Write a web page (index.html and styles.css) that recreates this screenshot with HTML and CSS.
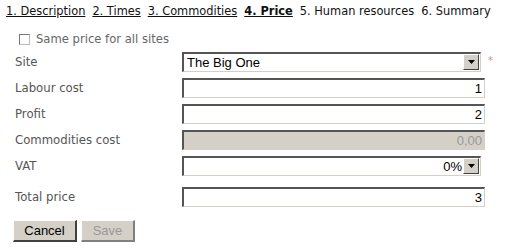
FILE: index.html
```html
<!DOCTYPE html>
<html>
<head>
<meta charset="utf-8">
<link rel="stylesheet" href="styles.css">
</head>
<body>
<nav class="steps">
  <a class="step link" href="#">1. Description</a>
  <a class="step link" href="#">2. Times</a>
  <a class="step link" href="#">3. Commodities</a>
  <a class="step link current" href="#">4. Price</a>
  <span class="step">5. Human resources</span>
  <span class="step">6. Summary</span>
</nav>
<form class="form">
  <label class="same"><span class="checkbox"></span>Same price for all sites</label>
  <div class="row">
    <span class="label">Site</span>
    <div class="select wide"><span class="value">The Big One</span><span class="arrow"><svg width="7" height="4" viewBox="0 0 7 4"><path d="M0 0h7L3.5 4z" fill="#000"/></svg></span></div>
    <span class="req">*</span>
  </div>
  <div class="row">
    <span class="label">Labour cost</span>
    <div class="input">1</div>
  </div>
  <div class="row">
    <span class="label">Profit</span>
    <div class="input">2</div>
  </div>
  <div class="row">
    <span class="label">Commodities cost</span>
    <div class="input disabled">0,00</div>
  </div>
  <div class="row">
    <span class="label">VAT</span>
    <div class="select wide right"><span class="value">0%</span><span class="arrow"><svg width="7" height="4" viewBox="0 0 7 4"><path d="M0 0h7L3.5 4z" fill="#000"/></svg></span></div>
  </div>
  <div class="row total">
    <span class="label">Total price</span>
    <div class="input">3</div>
  </div>
  <div class="buttons">
    <button type="button" class="btn">Cancel</button>
    <button type="button" class="btn disabled">Save</button>
  </div>
</form>
</body>
</html>
```

FILE: styles.css
```css
html, body {
  margin: 0;
  padding: 0;
  background: #fff;
}
body {
  width: 508px;
  height: 248px;
  overflow: hidden;
  font-family: "DejaVu Sans", Verdana, sans-serif;
  font-size: 11.7px;
  color: #555;
}
.steps {
  display: flex;
  gap: 7px;
  padding: 3px 0 0 6px;
  height: 18px;
  line-height: 16px;
  font-size: 11.4px;
  color: #111;
}
.step {
  color: #111;
  text-decoration: none;
  white-space: nowrap;
}
.step.link {
  text-decoration: underline;
}
.step.current {
  font-weight: bold;
}
.form {
  display: flex;
  flex-direction: column;
}
.same {
  display: flex;
  align-items: center;
  height: 16px;
  margin: 10px 0 0 19px;
  color: #666;
  font-size: 11.6px;
}
.checkbox {
  width: 9px;
  height: 9px;
  border: 1px solid #777;
  border-right-color: #bbb;
  border-bottom-color: #bbb;
  margin-right: 6px;
  background: #fff;
}
.row {
  display: grid;
  grid-template-columns: 167px 303px auto;
  align-items: center;
  height: 20px;
  margin-top: 6px;
  padding-left: 15px;
}
.same + .row {
  margin-top: 5px;
}
.row.total {
  margin-top: 11px;
}
.label {
  color: #555;
}
.input, .select {
  box-sizing: border-box;
  height: 20px;
  background: #fff;
  border-top: 2px solid #555;
  border-left: 2px solid #555;
  border-right: 1px solid #d4d0c8;
  border-bottom: 1px solid #d4d0c8;
  font-family: "Liberation Sans", Arial, sans-serif;
  font-size: 13px;
  color: #000;
  line-height: 17px;
}
.input {
  text-align: right;
  padding-right: 2px;
}
.input.disabled {
  background: #d4d0c8;
  color: #999;
}
.select {
  width: 299px;
  display: flex;
  align-items: stretch;
  padding: 0 1px 1px 0;
}
.select .value {
  flex: 1;
  padding-left: 3px;
}
.select.right .value {
  text-align: right;
  padding-right: 1px;
}
.arrow {
  box-sizing: border-box;
  width: 16px;
  height: 16px;
  background: #d4d0c8;
  border-top: 1px solid #fff;
  border-left: 1px solid #fff;
  border-right: 1px solid #404040;
  border-bottom: 1px solid #404040;
  display: flex;
  align-items: center;
  justify-content: center;
}
.req {
  color: #d88;
  font-size: 10px;
  align-self: start;
  margin: 3px 0 0 3px;
}
.buttons {
  display: flex;
  gap: 4px;
  margin: 13px 0 0 13px;
}
.btn {
  box-sizing: border-box;
  height: 22px;
  padding: 0 10px;
  background: #d4d0c8;
  border-top: 1px solid #fff;
  border-left: 1px solid #fff;
  border-right: 2px solid #404040;
  border-bottom: 2px solid #404040;
  font-family: "Liberation Sans", Arial, sans-serif;
  font-size: 13px;
  color: #000;
}
.btn:first-child {
  width: 64px;
}
.btn.disabled {
  width: 54px;
  color: #999;
  border-right-color: #808080;
  border-bottom-color: #808080;
}
```
